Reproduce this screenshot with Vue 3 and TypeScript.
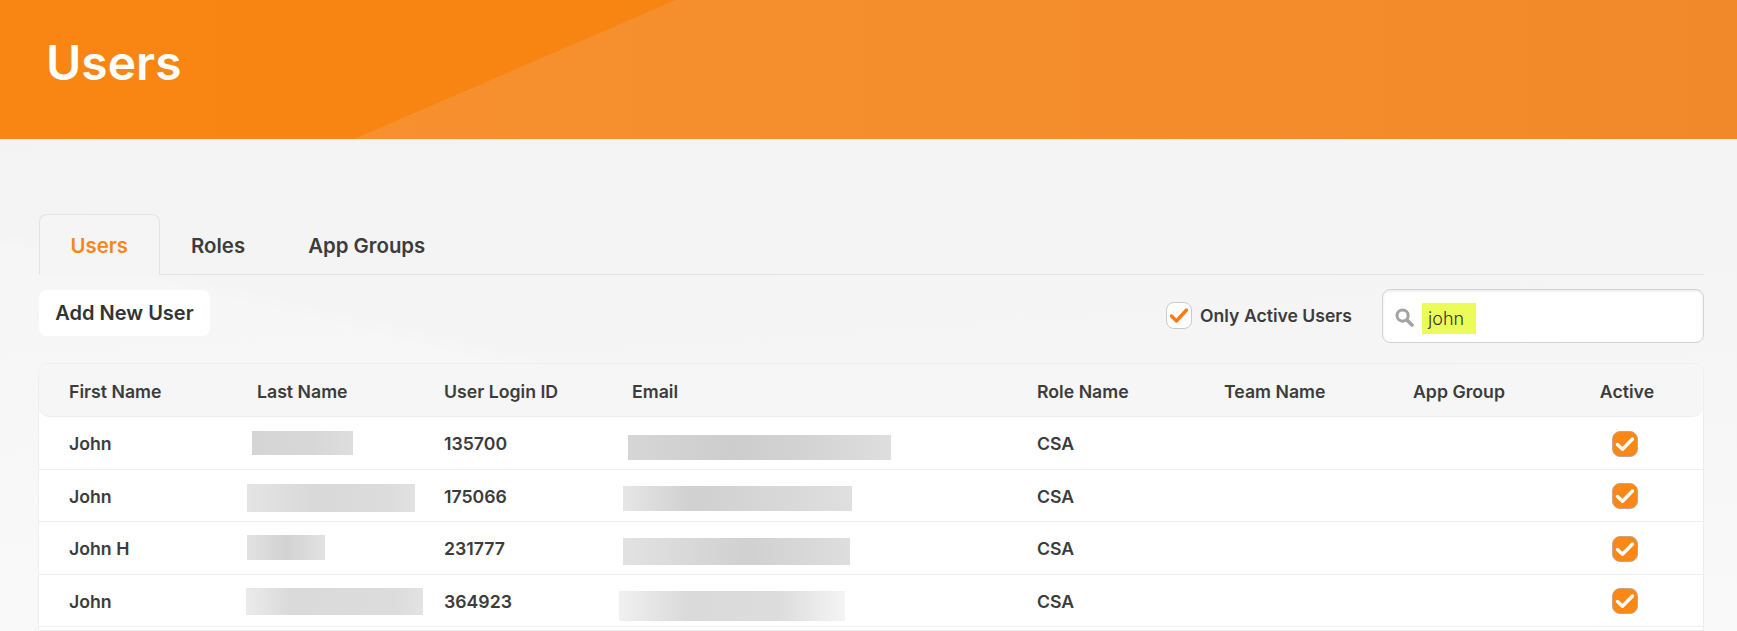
<script setup lang="ts">
interface Mask {
  left: number;
  top: number;
  width: number;
  height: number;
  tone: string;
}
interface UserRow {
  first: string;
  login: string;
  role: string;
  lastMask: Mask;
  emailMask: Mask;
}

const tabs = ["Users", "Roles", "App Groups"];
const columns = ["First Name", "Last Name", "User Login ID", "Email", "Role Name", "Team Name", "App Group"];

const users: UserRow[] = [
  {
    first: "John",
    login: "135700",
    role: "CSA",
    lastMask: { left: -5, top: 14, width: 101, height: 24, tone: "#d5d5d5, #d7d7d7 60%, #dedede" },
    emailMask: { left: -4, top: 18, width: 263, height: 25, tone: "#d6d6d6, #cdcdcd 40%, #d4d4d4 70%, #dedede" },
  },
  {
    first: "John",
    login: "175066",
    role: "CSA",
    lastMask: { left: -10, top: 14, width: 168, height: 28, tone: "#e4e4e4, #d9d9d9 40%, #dcdcdc 85%, #e2e2e2" },
    emailMask: { left: -9, top: 16, width: 229, height: 25, tone: "#e6e6e6, #d0d0d0 30%, #d8d8d8 70%, #dfdfdf" },
  },
  {
    first: "John H",
    login: "231777",
    role: "CSA",
    lastMask: { left: -10, top: 13, width: 78, height: 25, tone: "#e2e2e2, #d2d2d2 50%, #e2e2e2" },
    emailMask: { left: -9, top: 16, width: 227, height: 27, tone: "#e2e2e2, #d0d0d0 55%, #dedede" },
  },
  {
    first: "John",
    login: "364923",
    role: "CSA",
    lastMask: { left: -11, top: 13, width: 177, height: 27, tone: "#ebebeb, #dadada 25%, #dcdcdc 85%, #e3e3e3" },
    emailMask: { left: -13, top: 16, width: 226, height: 30, tone: "#f0f0f0, #dadada 30%, #dcdcdc 70%, #f4f4f4" },
  },
];

function maskStyle(m: Mask) {
  return {
    left: `${m.left}px`,
    top: `${m.top}px`,
    width: `${m.width}px`,
    height: `${m.height}px`,
    background: `linear-gradient(90deg, ${m.tone})`,
  };
}
</script>

<template>
  <div class="page">
    <header class="banner">
      <h1 class="banner_title">Users</h1>
    </header>

    <main class="content">
      <nav class="tabs">
        <span v-for="(tab, i) in tabs" :key="tab" class="tab" :class="{ tab_active: i === 0 }">{{ tab }}</span>
      </nav>

      <div class="toolbar">
        <button class="add_btn" type="button">Add New User</button>
        <div class="filters">
          <label class="only_active">
            <span class="check_outline">
              <svg width="20" height="17" viewBox="0 0 20 17">
                <path d="M2.5 9l5 5L17.5 3" fill="none" stroke="#fb7c16" stroke-width="3.4" stroke-linecap="round" stroke-linejoin="round" />
              </svg>
            </span>
            Only Active Users
          </label>
          <div class="search">
            <svg class="search_icon" width="19" height="19" viewBox="0 0 19 19">
              <circle cx="7.6" cy="7.6" r="5.6" fill="none" stroke="#a3a3a3" stroke-width="3" />
              <path d="M12 12l5 5" stroke="#a3a3a3" stroke-width="3.6" stroke-linecap="round" />
            </svg>
            <span class="search_value">john</span>
          </div>
        </div>
      </div>

      <section class="grid_card">
        <div class="row row_head">
          <span v-for="col in columns" :key="col" class="cell">{{ col }}</span>
          <span class="cell cell_center cell_active">Active</span>
        </div>
        <div v-for="user in users" :key="user.login" class="row row_body">
          <span class="cell">{{ user.first }}</span>
          <span class="cell"><i class="mask" :style="maskStyle(user.lastMask)" /></span>
          <span class="cell">{{ user.login }}</span>
          <span class="cell"><i class="mask" :style="maskStyle(user.emailMask)" /></span>
          <span class="cell">{{ user.role }}</span>
          <span class="cell" />
          <span class="cell" />
          <span class="cell cell_center">
            <span class="check_solid">
              <svg width="20" height="16" viewBox="0 0 20 16">
                <path d="M2.5 8.5l5 4.8L17.5 3" fill="none" stroke="#fff" stroke-width="3.4" stroke-linecap="round" stroke-linejoin="round" />
              </svg>
            </span>
          </span>
        </div>
      </section>
    </main>
  </div>
</template>

<style>
  html,
  body {
    margin: 0;
    background: #f6f6f6;
  }
</style>

<style scoped>
  .page {
    height: 631px;
    overflow: hidden;
    display: flex;
    flex-direction: column;
    font-family: Inter, "Noto Sans", sans-serif;
    color: #3c3c3c;
  }

  .banner {
    height: 139px;
    flex: none;
    display: flex;
    align-items: center;
    padding: 0 0 14px 46px;
    box-sizing: border-box;
    background: linear-gradient(90deg, #f98613 0, #f78511 39%, #f68a24 100%);
    position: relative;
  }

  .banner::after {
    content: "";
    position: absolute;
    inset: 0;
    background: linear-gradient(90deg, #f8922e, #f48d2c 60%, #f1892a);
    clip-path: polygon(676px 0, 100% 0, 100% 100%, 354px 100%);
  }

  .banner_title {
    position: relative;
    z-index: 1;
    margin: 0;
    font-size: 48px;
    font-weight: 600;
    color: #fff;
    line-height: 1;
  }

  .content {
    flex: 1;
    padding: 75px 33px 0 39px;
    display: flex;
    flex-direction: column;
    background:
      linear-gradient(193.5deg, transparent 491px, rgba(255, 255, 255, 0.2) 510px),
      linear-gradient(176deg, #f3f3f3 0, #f5f5f5 45%, #f9f9f9 100%);
  }

  .tabs {
    display: flex;
    height: 61px;
    box-sizing: border-box;
    border-bottom: 1px solid #e3e3e3;
  }

  .tab {
    padding: 0 30.5px;
    height: 61px;
    box-sizing: border-box;
    display: flex;
    align-items: center;
    font-size: 20.4px;
    font-weight: 600;
    border: 1px solid transparent;
    border-bottom: none;
  }

  .tab_active {
    color: #fb8519;
    border-color: #e3e3e3;
    border-radius: 8px 8px 0 0;
    background: #f5f5f5;
  }

  .toolbar {
    display: flex;
    align-items: flex-start;
    justify-content: space-between;
    margin-top: 15px;
    height: 73px;
  }

  .add_btn {
    width: 171px;
    height: 46px;
    border: none;
    border-radius: 8px;
    background: #fff;
    font-family: inherit;
    font-size: 20px;
    font-weight: 600;
    color: #333;
    padding: 0;
  }

  .filters {
    display: flex;
    align-items: flex-start;
    gap: 30px;
  }

  .only_active {
    display: flex;
    align-items: center;
    gap: 8px;
    margin-top: 12px;
    font-size: 17.6px;
    font-weight: 600;
  }

  .check_outline {
    width: 26px;
    height: 27px;
    box-sizing: border-box;
    border: 1px solid #c9c9c9;
    border-radius: 8px;
    background: #fff;
    display: flex;
    align-items: center;
    justify-content: center;
  }

  .search {
    width: 322px;
    height: 54px;
    margin-top: -1px;
    box-sizing: border-box;
    border: 1px solid #d4d4d4;
    border-radius: 8px;
    background: #fff;
    box-shadow: inset 0 1px 3px rgba(0, 0, 0, 0.1);
    display: flex;
    align-items: center;
    padding-left: 12px;
    gap: 8px;
  }

  .search_icon {
    margin-top: 3px;
  }

  .search_value {
    display: block;
    width: 54px;
    height: 31px;
    margin-top: 4px;
    box-sizing: border-box;
    padding-left: 6px;
    background: #ebfb58;
    font-size: 18px;
    font-weight: 300;
    line-height: 31px;
    color: #333;
  }

  .grid_card {
    background: #fff;
    border: 1px solid #eee;
    border-radius: 10px 10px 0 0;
    margin-left: -1px;
    flex: 1;
  }

  .row {
    display: grid;
    grid-template-columns: 188px 187px 188px 405px 187px 189px 165px 1fr;
    align-items: center;
    box-sizing: border-box;
    font-size: 17.7px;
    font-weight: 600;
  }

  .row_head {
    height: 53px;
    background: #f6f6f6;
    border-bottom: 1px solid #eee;
    border-radius: 10px;
  }

  .row_body {
    height: 52.5px;
    border-bottom: 1px solid #eee;
  }

  .cell {
    padding: 2px 0 0 30px;
    position: relative;
    align-self: stretch;
    display: flex;
    align-items: center;
  }

  .cell_center {
    padding-left: 0;
    justify-content: center;
  }

  .cell_active {
    padding-left: 3px;
  }

  .mask {
    position: absolute;
    left: 0;
    display: block;
    margin-left: 30px;
  }

  .check_solid {
    width: 26px;
    height: 26px;
    margin-left: -2px;
    box-sizing: border-box;
    border: 1px solid #c9a589;
    border-radius: 8px;
    background: #fa8716;
    display: flex;
    align-items: center;
    justify-content: center;
  }
</style>
